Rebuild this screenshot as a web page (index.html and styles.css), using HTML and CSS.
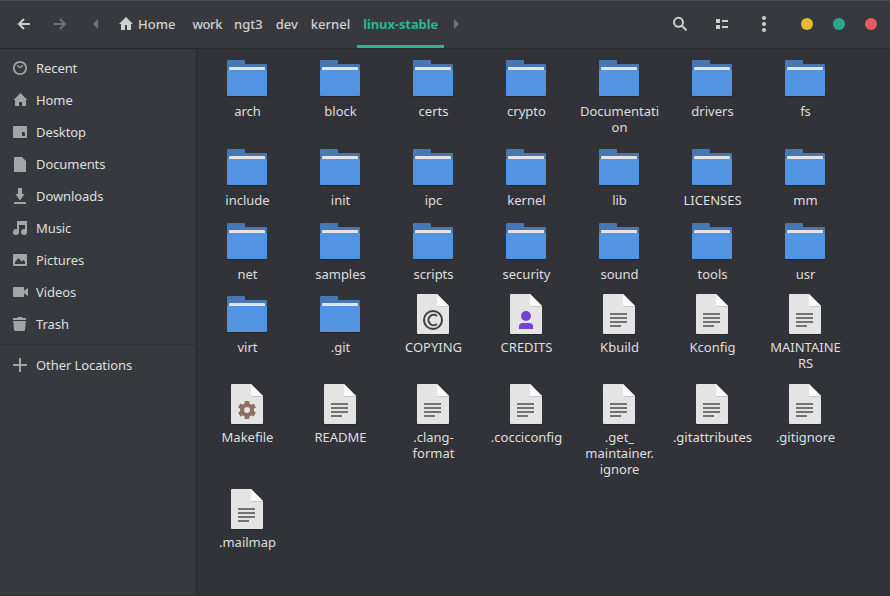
FILE: index.html
```
<!DOCTYPE html>
<html lang="en">
<head>
  <meta charset="UTF-8" />
  <meta name="viewport" content="width=device-width, initial-scale=1.0" />
  <title>linux-stable</title>
  <link rel="stylesheet" href="styles.css">
</head>
<body>
  <header class="header">
    <nav class="history">
      <svg class="icon" viewBox="0 0 16 16"><path d="M8 3L3 8l5 5M3 8h11" fill="none" stroke="currentColor" stroke-width="2"/></svg>
      <svg class="icon dim" viewBox="0 0 16 16"><path d="M8 3l5 5-5 5M13 8H2" fill="none" stroke="currentColor" stroke-width="2"/></svg>
    </nav>
    <nav class="path">
      <svg class="arrow" viewBox="0 0 5 10"><path d="M5 0v10L0 5z" fill="currentColor"/></svg>
      <a class="crumb home"><svg class="icon" viewBox="0 0 16 16"><path d="M8 1L1 8h2v6h4V9h2v5h4V8h2z" fill="currentColor"/></svg>Home</a>
      <a class="crumb work">work</a>
      <a class="crumb">ngt3</a>
      <a class="crumb dev">dev</a>
      <a class="crumb">kernel</a>
      <a class="crumb current">linux-stable</a>
      <svg class="arrow next" viewBox="0 0 5 10"><path d="M0 0v10l5-5z" fill="currentColor"/></svg>
    </nav>
    <div class="tools">
      <svg class="icon" viewBox="0 0 16 16"><circle cx="6.500" cy="6.300" r="4.500" fill="none" stroke="currentColor" stroke-width="2"/><path d="M9.800 9.600l4.700 4.700" stroke="currentColor" stroke-width="2"/></svg>
      <svg class="icon" viewBox="0 0 16 16"><path d="M2 3h4v4H2zM2 9h4v4H2zM8 4h6v2H8zM8 10h6v2H8z" fill="currentColor"/></svg>
      <svg class="icon" viewBox="0 0 16 16"><g fill="currentColor"><circle cx="8" cy="2" r="2"/><circle cx="8" cy="8" r="2"/><circle cx="8" cy="14" r="2"/></g></svg>
    </div>
    <div class="window-buttons">
      <span class="dot minimize"></span>
      <span class="dot maximize"></span>
      <span class="dot close"></span>
    </div>
  </header>

  <div class="main">
    <aside class="sidebar">
      <ul class="places">
        <li><svg class="icon" viewBox="0 0 16 16"><g fill="none" stroke="currentColor"><circle cx="8" cy="8" r="6.200" stroke-width="1.800"/><path d="M5.300 5.200L8 7.700l3-2.200" stroke-width="1.200"/></g></svg>Recent</li>
        <li><svg class="icon" viewBox="0 0 16 16"><path d="M8.500 1L1.500 8H3v6h4v-4h3v4h4V8h1.500z" fill="currentColor"/></svg>Home</li>
        <li><svg class="icon" viewBox="0 0 16 16"><path fill-rule="evenodd" d="M1.500 2h13l.5.5v11l-.5.5h-13l-.5-.5v-11zM10 8v4h3V9.200L12 8z" fill="currentColor"/></svg>Desktop</li>
        <li><svg class="icon" viewBox="0 0 16 16"><path d="M2.500 1H10l4 4v10.500l-.5.5h-11l-.5-.5v-14z" fill="currentColor"/></svg>Documents</li>
        <li><svg class="icon" viewBox="0 0 16 16"><path d="M6 0h4v6h2.500L8 12.500 3.500 6H6zM2 14h12v2H2z" fill="currentColor"/></svg>Downloads</li>
        <li><svg class="icon" viewBox="0 0 16 16"><path d="M5 1h10v11a3 2.900 0 1 1-2-2.700V5H7v7.200a3 2.900 0 1 1-2-2.900z" fill="currentColor"/></svg>Music</li>
        <li><svg class="icon" viewBox="0 0 16 16"><path fill-rule="evenodd" d="M1.500 2h13l.5.5v11l-.5.5h-13l-.5-.5v-11zM3 12h10V9.500L11.300 8 9.500 9.500 6.500 6 3 10z" fill="currentColor"/></svg>Pictures</li>
        <li><svg class="icon" viewBox="0 0 16 16"><path d="M1.500 3h10l.5.5v3.200L16 4v8l-4-2.700v3.200l-.5.5h-10l-.5-.5v-9z" fill="currentColor"/></svg>Videos</li>
        <li><svg class="icon" viewBox="0 0 16 16"><path d="M1 2h4l1-1h4l1 1h3v2H1zM1.200 5h12.600L13 14l-1 1H3l-1-1z" fill="currentColor"/></svg>Trash</li>
      </ul>
      <ul class="places other">
        <li><svg class="icon" viewBox="0 0 16 16"><path d="M7 1h2v6h6v2H9v6H7V9H1V7h6z" fill="currentColor"/></svg>Other Locations</li>
      </ul>
    </aside>
    <main class="files" id="files"></main>
  </div>

  <script>
    const page = `
      <path d="M9 5h20l11 11.500V44a1 1 0 0 1-1 1H9a1 1 0 0 1-1-1V6a1 1 0 0 1 1-1z" fill="#26272b"/>
      <path d="M9 4h19l12 12v27a1 1 0 0 1-1 1H9a1 1 0 0 1-1-1V5a1 1 0 0 1 1-1z" fill="#e4e4e4"/>
      <path d="M28 16h12v1H29z" fill="#c8c8c8"/>
      <path d="M28 4l12 12H29a1 1 0 0 1-1-1z" fill="#fafafa"/>`;

    const icons = {
      folder: `
        <path d="M4 40h40v2a1 1 0 0 1-1 1H5a1 1 0 0 1-1-1z" fill="#26272b"/>
        <path d="M5 6h16a1 1 0 0 1 1 1v3h21a1 1 0 0 1 1 1v12H4V7a1 1 0 0 1 1-1z" fill="#4877b1"/>
        <path d="M7 13h34a1 1 0 0 1 1 1v4H6v-4a1 1 0 0 1 1-1z" fill="#e4e4e4"/>
        <path d="M5 16h38a1 1 0 0 1 1 1v24a1 1 0 0 1-1 1H5a1 1 0 0 1-1-1V17a1 1 0 0 1 1-1z" fill="#5294e2"/>`,
      text: page + '<path d="M15 23h17v2H15zM15 27h17v2H15zM15 31h17v2H15zM15 35h11v2H15z" fill="#727272"/>',
      copying: page + `
        <g fill="none" stroke="#3f3f3f" stroke-width="2"><circle cx="24" cy="30" r="9"/>
        <path d="M28 26a5.200 5.200 0 1 0 0 8"/></g>`,
      credits: page + `
        <circle cx="24" cy="26" r="5" fill="#7343d3"/>
        <path d="M17 39v-2.500q0-3.500 3.500-3.500h7q3.500 0 3.500 3.500V39z" fill="#7343d3"/>`,
      makefile: page + `
        <circle cx="24" cy="30" r="5" fill="none" stroke="#8d7063" stroke-width="4"/>
        <path d="M24 21v4M24 35v4M16.200 25.500l3.500 2M28.300 32.500l3.500 2M16.200 34.500l3.500-2M28.300 27.500l3.500-2" stroke="#8d7063" stroke-width="4.500"/>`
    };

    // label, icon
    const files = [
      ['arch', 'folder'], ['block', 'folder'], ['certs', 'folder'], ['crypto', 'folder'],
      ['Documentati<br>on', 'folder'], ['drivers', 'folder'], ['fs', 'folder'],
      ['include', 'folder'], ['init', 'folder'], ['ipc', 'folder'], ['kernel', 'folder'],
      ['lib', 'folder'], ['LICENSES', 'folder'], ['mm', 'folder'],
      ['net', 'folder'], ['samples', 'folder'], ['scripts', 'folder'], ['security', 'folder'],
      ['sound', 'folder'], ['tools', 'folder'], ['usr', 'folder'],
      ['virt', 'folder'], ['.git', 'folder'], ['COPYING', 'copying'], ['CREDITS', 'credits'],
      ['Kbuild', 'text'], ['Kconfig', 'text'], ['MAINTAINE<br>RS', 'text'],
      ['Makefile', 'makefile'], ['README', 'text'], ['.clang-<br>format', 'text'], ['.cocciconfig', 'text'],
      ['.get_<br>maintainer.<br>ignore', 'text'], ['.gitattributes', 'text'], ['.gitignore', 'text'],
      ['.mailmap', 'text']
    ];

    document.getElementById('files').innerHTML = files.map(([label, icon]) => `
      <div class="file">
        <svg class="file-icon" viewBox="0 0 48 48">${icons[icon]}</svg>
        <span class="label">${label}</span>
      </div>`).join('');
  </script>
</body>
</html>
```
FILE: styles.css
```
* {
  box-sizing: border-box;
  margin: 0;
  padding: 0;
}
body {
  display: flex;
  flex-direction: column;
  height: 100vh;
  overflow: hidden;
  background: #323338;
  color: #dfdfdf;
  font-family: "Noto Sans", "Open Sans", sans-serif;
  font-size: 13px;
  line-height: 16px;
}
.icon {
  width: 16px;
  height: 16px;
  flex-shrink: 0;
}
.header {
  display: flex;
  align-items: center;
  height: 49px;
  flex-shrink: 0;
  padding: 0 13px 1px 16px;
  background: #38393e;
  border-top: 1px solid #4b4d51;
  border-bottom: 1px solid #28292d;
  color: #d0d0d0;
}
.history {
  display: flex;
  gap: 20px;
}
.dim {
  color: #707175;
}
.path {
  display: flex;
  align-items: center;
  height: 46px;
  margin-left: 25px;
  font-weight: 500;
}
.arrow {
  width: 5px;
  height: 10px;
  color: #707175;
}
.crumb {
  display: flex;
  align-items: center;
  height: 46px;
  padding: 0 6px;
}
.home {
  gap: 4px;
  margin-left: 14px;
  margin-right: 5px;
}
.work {
  letter-spacing: -0.4px;
}
.dev {
  margin-left: 1px;
  margin-right: 1px;
}
.current {
  height: 47px;
  margin-bottom: -1px;
  margin-left: 1px;
  padding-bottom: 1px;
  color: #2eb398;
  font-weight: 700;
  letter-spacing: -0.1px;
  box-shadow: inset 0 -3px #2eb398;
}
.next {
  margin-left: 10px;
}
.tools {
  display: flex;
  gap: 26px;
  margin-left: auto;
}
.window-buttons {
  display: flex;
  gap: 20px;
  margin-left: 29px;
}
.dot {
  width: 12px;
  height: 12px;
  border-radius: 50%;
}
.minimize {
  background: #e9ba36;
}
.maximize {
  background: #2fa78c;
}
.close {
  background: #e75c62;
}
.main {
  display: flex;
  flex: 1;
  border-bottom: 1px solid #323237;
}
.sidebar {
  width: 197px;
  padding-top: 3px;
  background: #363a3e;
  border-right: 1px solid #27282c;
}
.places {
  list-style: none;
}
.places li {
  display: flex;
  align-items: center;
  gap: 8px;
  height: 32px;
  padding-left: 12px;
  letter-spacing: -0.08px;
}
.places .icon {
  color: #a4a5a7;
}
.other {
  margin-top: 4px;
  padding-top: 4px;
  border-top: 1px solid #2c2f33;
}
.files {
  display: grid;
  grid-template-columns: repeat(7, 93px);
  grid-template-rows: 89px 74px 73px 90px 105px 70px;
  padding: 5px 0 0 4px;
}
.file {
  display: flex;
  flex-direction: column;
  align-items: center;
  text-align: center;
}
.file-icon {
  width: 48px;
  height: 48px;
  margin-right: 1px;
}
.label {
  margin-top: 1px;
  white-space: nowrap;
}
```
